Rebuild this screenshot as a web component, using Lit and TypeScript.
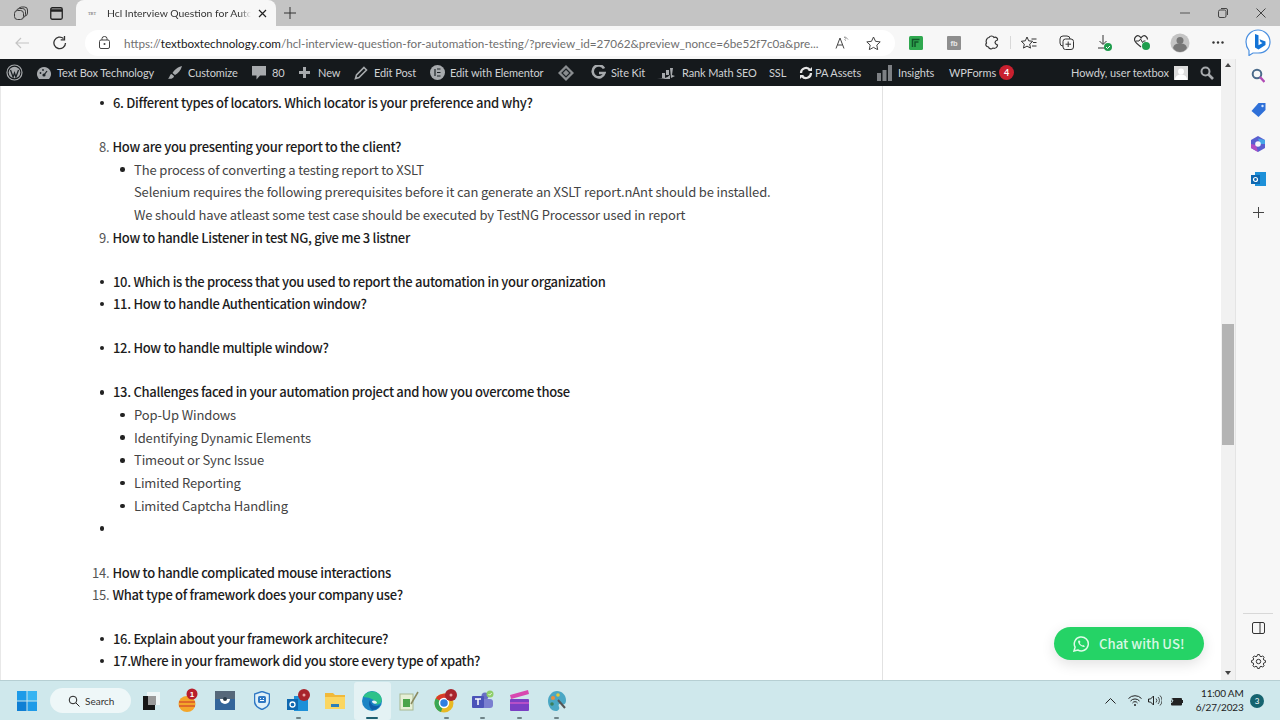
import { LitElement, html, css, svg } from "lit";
import { customElement } from "lit/decorators.js";

const ic = (w: number, h: number, body: unknown, vb = `0 0 ${w} ${h}`) =>
  html`<svg width=${w} height=${h} viewBox=${vb} fill="none">${body}</svg>`;

const GREY = "#a7aaad";
const S = "#3a3a3a";

const gearPath = (() => {
  const pts: string[] = [];
  const n = 8;
  for (let i = 0; i < n; i++) {
    const a = (i / n) * Math.PI * 2;
    const d = Math.PI / n;
    const p = (r: number, t: number) => `${(7.5 + r * Math.cos(t)).toFixed(2)} ${(7.5 + r * Math.sin(t)).toFixed(2)}`;
    pts.push(`${i ? "L" : "M"}${p(5.4, a - d * 0.75)}`, `L${p(7, a - d * 0.35)}`, `L${p(7, a + d * 0.35)}`, `L${p(5.4, a + d * 0.75)}`);
  }
  return pts.join(" ") + "Z";
})();

const barIcons: Record<string, unknown> = {
  wp: ic(17, 17, svg`<circle cx="8.5" cy="8.5" r="7.5" stroke="${GREY}" stroke-width="1.2"/><circle cx="8.5" cy="8.5" r="5.8" fill="${GREY}"/><path d="M4.5 6l2.6 7 1.4-4 1.4 4 2.6-7" stroke="#1d2327" stroke-width="1.3"/>`),
  gauge: ic(16, 14, svg`<path d="M8 1a7 7 0 0 0-6 10.6l1 1.4h10l1-1.4A7 7 0 0 0 8 1z" fill="${GREY}"/><circle cx="8" cy="9" r="1.6" fill="#1d2327"/><path d="M8 9l3-4" stroke="#1d2327" stroke-width="1.2"/><circle cx="4.5" cy="7" r=".9" fill="#1d2327"/><circle cx="7" cy="4" r=".9" fill="#1d2327"/>`),
  brush: ic(16, 15, svg`<path d="M15 1C11 2 7 5 5.5 8l2.5 2C11 8.500 14 5 15 1z" fill="${GREY}"/><path d="M4.500 9C2.500 9.500 3 12.500 1 13.500c2.500 1 6-.2 6-2.500z" fill="${GREY}"/>`),
  comment: ic(14, 15, svg`<path d="M0 1h14v9.500H8l-3.500 4v-4H0z" fill="${GREY}"/>`),
  plus: ic(13, 13, svg`<path d="M6.500 1v11M1 6.500h11" stroke="${GREY}" stroke-width="3"/>`),
  pencil: ic(14, 14, svg`<path d="M10 1.500l2.500 2.500L5 11.500l-3.500 1 1-3.500z" stroke="${GREY}" stroke-width="1.600"/>`),
  el: ic(15, 15, svg`<circle cx="7.500" cy="7.500" r="7.500" fill="${GREY}"/><path d="M5 4v7M7 4h3.500M7 7.500h3.500M7 11h3.500" stroke="#1d2327" stroke-width="1.200"/>`),
  diamond: ic(18, 18, svg`<path d="M9 1l8 8-8 8-8-8z" fill="#8a8d90"/><path d="M9 5l4 4-4 4-4-4z" stroke="#1d2327" stroke-width="1.200"/>`),
  g: ic(15, 15, svg`<path d="M13 3.500A6 6 0 1 0 13.500 8H8" stroke="${GREY}" stroke-width="2.600"/>`),
  rank: ic(18, 14, svg`<path d="M0 13c5 0 10-1 13-4v4zM5 7h3v5H5zM9 4h3v5H9z" fill="${GREY}"/><path d="M13 2l3 0-1 7 3 1-4 2z" fill="${GREY}"/>`),
  pa: ic(14, 14, svg`<path d="M2 7a5 5 0 0 1 9-3M12 7a5 5 0 0 1-9 3" stroke="#e6e6e6" stroke-width="2.200"/><path d="M9 5h4V1zM5 9H1v4z" fill="#e6e6e6"/>`),
  bars: ic(15, 16, svg`<path d="M0 8h4v8H0zM5.500 5h4v11h-4zM11 0h4v16h-4z" fill="#7d8084"/>`),
};

type BarItem = { x: number; icon?: string; text?: string; badge?: string };
const leftBar: BarItem[] = [
  { x: 6, icon: "wp" }, { x: 36, icon: "gauge" }, { x: 57, text: "Text Box Technology" },
  { x: 167, icon: "brush" }, { x: 188, text: "Customize" }, { x: 252, icon: "comment" },
  { x: 272, text: "80" }, { x: 298, icon: "plus" }, { x: 318, text: "New" }, { x: 354, icon: "pencil" },
  { x: 374, text: "Edit Post" }, { x: 430, icon: "el" }, { x: 450, text: "Edit with Elementor" },
  { x: 557, icon: "diamond" }, { x: 591, icon: "g" }, { x: 611, text: "Site Kit" }, { x: 657, icon: "rank" },
  { x: 682, text: "Rank Math SEO" }, { x: 769, text: "SSL" }, { x: 799, icon: "pa" }, { x: 815, text: "PA Assets" },
  { x: 877, icon: "bars" }, { x: 898, text: "Insights" }, { x: 949, text: "WPForms" }, { x: 999, badge: "4" },
  { x: 1071 },
];

type Row = { k: "bullet" | "num" | "sub" | "plain" | "blank" | "empty"; t?: string; n?: string };
const rows: Row[] = [
  { k: "bullet", t: "6. Different types of locators. Which locator is your preference and why?" },
  { k: "blank" },
  { k: "num", n: "8.", t: "How are you presenting your report to the client?" },
  { k: "sub", t: "The process of converting a testing report to XSLT" },
  { k: "plain", t: "Selenium requires the following prerequisites before it can generate an XSLT report.nAnt should be installed." },
  { k: "plain", t: "We should have atleast some test case should be executed by TestNG Processor used in report" },
  { k: "num", n: "9.", t: "How to handle Listener in test NG, give me 3 listner" },
  { k: "blank" },
  { k: "bullet", t: "10. Which is the process that you used to report the automation in your organization" },
  { k: "bullet", t: "11. How to handle Authentication window?" },
  { k: "blank" },
  { k: "bullet", t: "12. How to handle multiple window?" },
  { k: "blank" },
  { k: "bullet", t: "13. Challenges faced in your automation project and how you overcome those" },
  { k: "sub", t: "Pop-Up Windows" },
  { k: "sub", t: "Identifying Dynamic Elements" },
  { k: "sub", t: "Timeout or Sync Issue" },
  { k: "sub", t: "Limited Reporting" },
  { k: "sub", t: "Limited Captcha Handling" },
  { k: "empty" },
  { k: "blank" },
  { k: "num", n: "14.", t: "How to handle complicated mouse interactions" },
  { k: "num", n: "15.", t: "What type of framework does your company use?" },
  { k: "blank" },
  { k: "bullet", t: "16. Explain about your framework architecure?" },
  { k: "bullet", t: "17.Where in your framework did you store every type of xpath?" },
];

const tb = {
  win: ic(20, 20, svg`<path d="M0 0h9.500v9.500H0z" fill="#1e9be8"/><path d="M10.500 0H20v9.500h-9.500z" fill="#37b4f2"/><path d="M0 10.500h9.500V20H0z" fill="#0f7fd4"/><path d="M10.500 10.500H20V20h-9.500z" fill="#1e9be8"/>`),
  copilot: ic(18, 18, svg`<rect x="5" y="0" width="13" height="13" fill="#eef6f7"/><rect x="1" y="4" width="12" height="14" fill="#161616"/><rect x="6" y="4" width="8" height="9" fill="#9a9a9a"/>`),
  burger: ic(20, 26, svg`<ellipse cx="9" cy="16" rx="8.500" ry="8" fill="#f4a62a"/><path d="M1 14h16M1 18h16" stroke="#d8552a" stroke-width="1.500"/><circle cx="14" cy="6" r="5.500" fill="#b81f2c"/><text x="14" y="9" font-size="8" fill="#fff" text-anchor="middle" font-family="Liberation Sans" font-weight="700">1</text>`),
  pocket: ic(20, 19, svg`<rect width="20" height="19" fill="#33659a"/><rect width="20" height="8" fill="#56687a"/><path d="M5 8h10a5 5 0 0 1-10 0z" fill="#fff"/><circle cx="10" cy="8" r="2" fill="#2a3a48"/>`),
  shield: ic(16, 19, svg`<path d="M8 .500l7.500 2.500v7c0 4.500-3.500 7-7.500 8.500C4 17 .500 14.500.500 10V3z" fill="#dff0f8" stroke="#2f78c4" stroke-width="1.500"/><rect x="4" y="5" width="8" height="7" rx="1.500" fill="#2f78c4"/><path d="M6 7.500h1M9 7.500h1M6 9.500h4" stroke="#fff"/>`),
  outlook: ic(24, 24, svg`<rect x="7" y="7" width="14" height="15" fill="#1d90d8"/><rect x="0" y="10" width="11" height="11" fill="#0f68b0"/><circle cx="5.500" cy="15.500" r="2.500" stroke="#fff" stroke-width="1.300"/><circle cx="17" cy="6" r="6" fill="#a8242c"/><circle cx="17" cy="6" r="1.500" fill="#e9a8a8"/>`),
  folder: ic(20, 17, svg`<path d="M0 1h8l2 2h10v14H0z" fill="#f1b93a"/><path d="M0 5h20v12H0z" fill="#fbd661"/><rect x="6" y="12" width="8" height="3" fill="#2d7fb8"/>`),
  edge: ic(20, 20, svg`<circle cx="10" cy="10" r="10" fill="#1a84c4"/><path d="M1 6C4 0 13-2 18 4c3 4 2 9-2 9.500-3 .2-4-2-3-3-2-3-7-4-12-4.500z" fill="#2ec28a"/><path d="M10 10c2-1.500 5 0 5 2-2 1.500-5 .5-5-2z" fill="#e8f5f7"/><path d="M8 9c-2 3-1 7 2 10 5 0 7-3 8-5-3 2-9 2-10-5z" fill="#0d5ea8"/>`),
  sheet: ic(20, 20, svg`<rect x="1" y="3" width="13" height="16" fill="#e6f0d6" stroke="#a8b890"/><path d="M4 8h7v8H4z" fill="#4ca44a"/><path d="M12 13L19 1" stroke="#8a8a60" stroke-width="1.500"/>`),
  chrome: ic(24, 24, svg`<circle cx="10" cy="14" r="9.500" fill="#e8b923"/><path d="M10 14L1.700 9.500A9.500 9.500 0 0 1 18 9z" fill="#d93a2b"/><path d="M10 14L1.700 9.500A9.500 9.500 0 0 0 7 23z" fill="#3aa655"/><circle cx="10" cy="14" r="4.500" fill="#2f7fe0" stroke="#fff" stroke-width="1.500"/><circle cx="17" cy="6" r="6" fill="#a8242c"/><circle cx="17" cy="6" r="1.500" fill="#e9a8a8"/>`),
  teams: ic(22, 21, svg`<circle cx="13" cy="6" r="3.500" fill="#6a6fc4"/><rect x="9" y="9" width="12" height="9" rx="3" fill="#7a7fd0"/><rect x="0" y="6" width="12" height="12" rx="1" fill="#4b53b8"/><path d="M3 9h6M6 9v6" stroke="#fff" stroke-width="1.500"/><circle cx="18" cy="4" r="3.500" fill="#8fce6a"/><path d="M16.500 4l1.200 1.200 2-2.200" stroke="#fff" stroke-width=".8"/>`),
  clap: ic(21, 21, svg`<path d="M1 5l18-5 1 4L2 9z" fill="#d848b0"/><rect x="1" y="9" width="19" height="12" rx="1" fill="#7a3fc4"/><path d="M1 13h19" stroke="#b650c8" stroke-width="2"/>`),
  palette: ic(20, 20, svg`<path d="M10 0c5 0 9 4 9 9s-3 5-5 4-3 1-2 3-1 4-3 4C4 20 1 15 1 10S5 0 10 0z" fill="#4aa7c4"/><circle cx="6" cy="7" r="2" fill="#ef8d3a"/><circle cx="11" cy="4" r="1.800" fill="#e4c93a"/><circle cx="5" cy="13" r="1.800" fill="#3a7f5a"/><path d="M11 9l7 8" stroke="#555" stroke-width="2"/>`),
};

const taskApps: { i: unknown; dot?: boolean; active?: boolean }[] = [
  { i: tb.copilot }, { i: tb.burger }, { i: tb.pocket }, { i: tb.shield },
  { i: tb.outlook, dot: true }, { i: tb.folder }, { i: tb.edge, dot: true, active: true }, { i: tb.sheet },
  { i: tb.chrome, dot: true }, { i: tb.teams, dot: true }, { i: tb.clap, dot: true }, { i: tb.palette, dot: true },
];

@customElement("app-root")
export class AppRoot extends LitElement {
  static styles = css`
    :host { display: flex; flex-direction: column; width: 1280px; height: 720px; overflow: hidden; background: #fff; font-family: Lato, sans-serif; }
    .tabstrip { height: 26px; background: #c4c4c4; display: flex; align-items: flex-end; flex: none; }
    .tb-l { width: 76px; height: 26px; display: flex; align-items: center; gap: 22px; padding-left: 14px; box-sizing: border-box; }
    .tab { width: 200px; height: 26px; background: #f7f7f7; border-radius: 8px 8px 0 0; display: flex; align-items: center; box-sizing: border-box; padding-left: 12px; font-size: 10.400px; color: #333; }
    .tab .fav { width: 19px; font-size: 6px; color: #777; font-family: "Liberation Serif", serif; flex: none; }
    .tab .title { width: 144px; white-space: nowrap; -webkit-mask-image: linear-gradient(90deg, #000 92%, transparent); flex: none; }
    .tab .x { margin-left: 7px; display: flex; }
    .plus { margin-left: 8px; height: 26px; display: flex; align-items: center; }
    .grow { flex: 1; }
    .win { height: 26px; display: flex; align-items: center; gap: 28px; padding-right: 14px; }
    .toolbar { height: 33px; background: #f7f7f7; display: flex; align-items: center; flex: none; box-sizing: border-box; position: relative; }
    .nav { width: 85px; display: flex; align-items: center; gap: 24px; padding-left: 15px; box-sizing: border-box; }
    .addr { width: 810px; height: 26px; background: #fff; border-radius: 13px; display: flex; align-items: center; box-sizing: border-box; padding-left: 14px; }
    .url { margin-left: 14px; width: 695px; font-size: 11.700px; color: #6f6f6f; white-space: nowrap; }
    .url b { font-weight: 400; color: #1a1a1a; }
    .addr .a { margin-left: 16px; margin-right: 17px; display: flex; }
    .ext { display: flex; align-items: center; margin-left: 2px; }
    .ext > span { width: 37.750px; display: flex; justify-content: center; align-items: center; position: relative; }
    .ext > span.div::after { content: ""; position: absolute; right: -1px; top: 1px; bottom: 1px; width: 1px; background: #d8d8d8; }
    .bing { margin-left: 8px; display: flex; }
    .main { flex: 1; display: flex; min-height: 0; position: relative; }
    .page { width: 1221px; display: flex; flex-direction: column; flex: none; }
    .admin { height: 27px; background: #15191c; display: flex; align-items: center; flex: none; color: #cfd1d3; font-size: 11px; letter-spacing: -.1px; }
    .slot { display: flex; align-items: center; white-space: nowrap; flex: none; }
    .badge { width: 15px; height: 15px; border-radius: 50%; background: #c9202f; color: #fff; font-size: 9px; font-weight: 700; display: flex; align-items: center; justify-content: center; }
    .howdy { margin-right: 5px; width: 98px; }
    .avatar { width: 14px; height: 14px; background: #dcdcdc; display: flex; margin-right: 12px; overflow: hidden; }
    .content { flex: 1; display: flex; min-height: 0; overflow: hidden; background: #fff; }
    .article { width: 883px; box-sizing: border-box; border-right: 1px solid #e2e2e2; padding-top: 6px; border-left: 1px solid #e8e8e8; flex: none; font-family: "Noto Sans CJK JP", "Noto Sans", sans-serif; font-size: 13px; letter-spacing: -.145px; color: #444; }
    .row { height: 22.100px; display: flex; align-items: center; white-space: nowrap; line-height: 22px; }
    .row b { font-weight: 500; color: #1c1c1c; letter-spacing: -.31px; }
    .row.sub, .row.plain { height: 22.800px; }
    .mark { width: 111.500px; flex: none; text-align: right; box-sizing: border-box; }
    .mark.n { padding-right: 3px; color: #555; }
    .dot { width: 112px; flex: none; display: flex; justify-content: flex-end; padding-right: 9px; box-sizing: border-box; }
    .dot i, .sdot i { width: 4.500px; height: 4.500px; border-radius: 50%; background: #222; display: block; }
    .sdot { width: 133px; flex: none; display: flex; justify-content: flex-end; padding-right: 9.500px; box-sizing: border-box; }
    .indent { width: 133px; flex: none; }
    .sb { width: 14px; background: #f1f1f1; flex: none; display: flex; flex-direction: column; align-items: center; border-right: 1px solid #e4e4e4; }
    .sb .up { margin-top: 4px; width: 0; height: 0; border: 3.500px solid transparent; border-top: 0; border-bottom: 4px solid #444; }
    .thumb { margin-top: 257px; width: 12px; height: 121px; background: #b4b4b4; flex: none; }
    .sb .down { margin-top: auto; margin-bottom: 5px; width: 0; height: 0; border: 3.500px solid transparent; border-bottom: 0; border-top: 4px solid #444; }
    .side { flex: 1; background: #f7f7f7; display: flex; flex-direction: column; align-items: center; }
    .side .top { display: flex; flex-direction: column; gap: 19.500px; align-items: center; padding-top: 9px; }
    .side .top svg:last-child { margin-top: 2px; }
    .side .bot { margin-top: auto; display: flex; flex-direction: column; gap: 20px; padding-bottom: 11px; align-items: center; }
    .sep { width: 30px; height: 1px; background: #d8d8d8; margin-bottom: -12px; }
    .chat { position: absolute; left: 1054px; top: 568px; width: 150px; height: 33px; border-radius: 17px; background: #25d366; color: #d8f8e4; display: flex; align-items: center; gap: 10px; padding-left: 19px; box-sizing: border-box; font-size: 13.200px; font-weight: 500; font-family: "Noto Sans CJK JP", "Noto Sans", sans-serif; box-shadow: 0 4px 14px rgba(0,0,0,.12); }
    .taskbar { height: 40px; background: #cfe8ec; border-top: 1px solid #b6cfd3; box-sizing: border-box; display: flex; align-items: center; flex: none; }
    .start { width: 50px; display: flex; justify-content: center; padding-left: 4px; box-sizing: border-box; }
    .search { width: 81px; height: 25px; background: #eef7f8; border-radius: 13px; display: flex; align-items: center; gap: 5px; padding-left: 18px; box-sizing: border-box; font-size: 10px; color: #333; }
    .apps { display: flex; margin-left: 1.500px; }
    .app { width: 36.900px; height: 38px; display: flex; align-items: center; justify-content: center; position: relative; }
    .app.active { background: #e4f2f4; border-radius: 3px; }
    .app .ind { position: absolute; bottom: 1px; left: 50%; width: 5px; margin-left: -2.500px; height: 2px; background: #6f8488; border-radius: 1px; }
    .app.active .ind { width: 12px; margin-left: -6px; background: #1d5f70; }
    .tray { margin-left: auto; display: flex; align-items: center; gap: 6.500px; padding-right: 16px; }
    .tray .chev { margin-right: 5px; display: flex; }
    .clock { text-align: right; font-size: 10px; letter-spacing: -.2px; line-height: 13.500px; color: #222; margin-left: 6.500px; }
    .count { width: 14px; height: 14px; border-radius: 50%; background: #15636f; color: #fff; font-size: 8px; display: flex; align-items: center; justify-content: center; }
  `;

  private bar() {
    const items = leftBar.slice(0, -1).map((it, i) => {
      const w = leftBar[i + 1].x - it.x;
      return html`<span class="slot" style="width:${w}px">${it.icon ? barIcons[it.icon] : ""}${it.text ?? ""}${it.badge ? html`<span class="badge">${it.badge}</span>` : ""}</span>`;
    });
    return html`<div class="admin">
      <span class="slot" style="width:6px"></span>${items}
      <span class="slot howdy">Howdy, user textbox</span>
      <span class="avatar">${ic(14, 14, svg`<circle cx="7" cy="5.500" r="3" fill="#fff"/><path d="M1 14c0-4 3-5.500 6-5.500s6 1.500 6 5.500z" fill="#fff"/>`)}</span>
      ${ic(14, 14, svg`<circle cx="5.500" cy="5.500" r="4" stroke="${GREY}" stroke-width="2"/><path d="M8.500 8.500l4.500 4.500" stroke="${GREY}" stroke-width="2.600"/>`)}
    </div>`;
  }

  private row(r: Row) {
    switch (r.k) {
      case "blank": return html`<div class="row"></div>`;
      case "empty": return html`<div class="row"><span class="dot"><i></i></span></div>`;
      case "bullet": return html`<div class="row"><span class="dot"><i></i></span><b>${r.t}</b></div>`;
      case "num": return html`<div class="row"><span class="mark n">${r.n}</span><b>${r.t}</b></div>`;
      case "sub": return html`<div class="row sub"><span class="sdot"><i></i></span>${r.t}</div>`;
      default: return html`<div class="row plain"><span class="indent"></span>${r.t}</div>`;
    }
  }

  render() {
    return html`
      <div class="tabstrip">
        <div class="tb-l">
          ${ic(14, 14, svg`<rect x="4.500" y="1" width="9" height="9" rx="3" stroke="${S}"/><rect x="2.500" y="2.500" width="9" height="9" rx="3" stroke="${S}" fill="#c4c4c4"/><rect x=".5" y="4.500" width="9" height="9" rx="3" stroke="${S}" fill="#c4c4c4"/>`)}
          ${ic(13, 13, svg`<rect x=".75" y=".75" width="11.500" height="11.500" rx="1.500" stroke="#222" stroke-width="1.300"/><path d="M1 3.500h11" stroke="#222" stroke-width="2.500"/>`)}
        </div>
        <div class="tab">
          <span class="fav">ᴛʙᴛ</span>
          <span class="title">Hcl Interview Question for Autom</span>
          <span class="x">${ic(9, 9, svg`<path d="M1 1l7 7M8 1L1 8" stroke="#222" stroke-width="1.200"/>`)}</span>
        </div>
        <div class="plus">${ic(12, 12, svg`<path d="M6 0v12M0 6h12" stroke="#333"/>`)}</div>
        <div class="grow"></div>
        <div class="win">
          ${ic(10, 10, svg`<path d="M0 5h10" stroke="#555"/>`)}
          ${ic(10, 10, svg`<rect x=".5" y="2" width="7.500" height="7.500" rx="1.500" stroke="#444"/><path d="M3 .5h5a1.500 1.500 0 0 1 1.500 1.500v5" stroke="#444"/>`)}
          ${ic(10, 10, svg`<path d="M.5.5l9 9M9.500.5l-9 9" stroke="#444"/>`)}
        </div>
      </div>
      <div class="toolbar">
        <div class="nav">
          ${ic(14, 12, svg`<path d="M14 6H1M6 1L1 6l5 5" stroke="#c4c4c4" stroke-width="1.200"/>`)}
          ${ic(14, 14, svg`<path d="M12.500 7A5.800 5.800 0 1 1 10.500 2.500" stroke="#333" stroke-width="1.300"/><path d="M11.500 0v3.800H7.700" stroke="#333" stroke-width="1.300"/>`)}
        </div>
        <div class="addr">
          ${ic(11, 13, svg`<rect x=".5" y="4" width="10" height="8.500" rx="1.500" stroke="#444"/><path d="M3 4V2.500a2.500 2 0 0 1 5 0V4" stroke="#444"/><circle cx="5.500" cy="8" r="1" fill="#444"/>`)}
          <span class="url">https://<b>textboxtechnology.com</b>/hcl-interview-question-for-automation-testing/?preview_id=27062&amp;preview_nonce=6be52f7c0a&amp;pre...</span>
          <span class="a">${ic(14, 13, svg`<path d="M1 12.500L5 2l4 10.500M2.500 9h5" stroke="#444" stroke-width="1"/><path d="M9 1l2 1.500M10 .5l3 3M9.500 3.500l1.500 1" stroke="#777" stroke-width=".8"/>`)}</span>
          ${ic(15, 14, svg`<path d="M7.500 1l2 4.300 4.700.6-3.400 3.200.9 4.600-4.200-2.300-4.200 2.300.9-4.600L.8 5.900l4.700-.6z" stroke="#444"/>`)}
        </div>
        <div class="ext">
          <span>${ic(14, 14, svg`<rect width="14" height="14" rx="1.500" fill="#2fa84f"/><path d="M3.500 11V3.500h7M6 11V6h3.500" stroke="#12552a" stroke-width="1.500"/>`)}</span>
          <span>${ic(14, 14, svg`<rect width="14" height="14" rx="1" fill="#8e8e8e"/><text x="7" y="10" font-size="7.500" font-weight="700" fill="#e8e8e8" text-anchor="middle" font-family="Liberation Sans">fb</text>`)}</span>
          <span class="div">${ic(15, 15, svg`<path d="M5 2.500C6 .5 9 .500 10 2.500c2-1 4 1 3.500 2.500C12 5.500 11 7 11 7.500s1 2 2.500 2.500c0 2-2 4-4.500 3-1 1.500-4 1-4.500-1C2 12 1 9.500 2.500 8c-1-2 0-5 2.500-5.500z" stroke="#333" stroke-width="1.200"/>`)}</span>
          <span>${ic(16, 14, svg`<path d="M6 1l1.700 3.800 4 .5-3 2.800.8 4-3.500-2-3.500 2 .8-4-3-2.800 4-.5z" stroke="#333"/><path d="M10.500 3h5M12 6.500h3.500M11 10h4.500" stroke="#333"/>`)}</span>
          <span>${ic(15, 15, svg`<rect x="1" y="1" width="10" height="10" rx="3" stroke="#333"/><rect x="4" y="4" width="10.500" height="10.500" rx="2.500" fill="#f7f7f7" stroke="#333"/><path d="M9.200 6.500v5.500M6.500 9.200H12" stroke="#333"/>`)}</span>
          <span>${ic(15, 16, svg`<path d="M6 0v9M2.500 6L6 9.500 9.500 6M1 13h7" stroke="#333"/><circle cx="11" cy="12" r="4" fill="#1f9d4d"/><path d="M9 12l1.500 1.500L13 11" stroke="#fff"/>`)}</span>
          <span>${ic(16, 15, svg`<path d="M7 12C3 9 .5 7 .5 4.500 .5 2 3 0 5 1c1 .5 1.500 1 2 2 .5-1 1-1.500 2-2 2-1 4.500 1 4.500 3.500" stroke="#333" stroke-width="1.200"/><path d="M2 6h3l1.500-2 2 3.500 1-1.500h2" stroke="#333"/><circle cx="12" cy="11" r="4" fill="#1f9d4d"/>`)}</span>
          <span>${ic(20, 20, svg`<circle cx="10" cy="10" r="9.500" fill="#c4c4c4"/><circle cx="10" cy="7.500" r="3.500" fill="#777"/><path d="M3 15c1-4 4-4.500 7-4.500s6 .5 7 4.500c-2 3-5 4-7 4s-5-1-7-4z" fill="#777"/>`)}</span>
          <span>${ic(12, 3, svg`<circle cx="1.500" cy="1.500" r="1.200" fill="#333"/><circle cx="6" cy="1.500" r="1.200" fill="#333"/><circle cx="10.500" cy="1.500" r="1.200" fill="#333"/>`)}</span>
        </div>
        <span class="bing">${ic(26, 27, svg`<path d="M13 1a12 12 0 0 1 12 12c0 6.500-5 11-12 11H8l-4 2.500v-5C2 19 1 16.500 1 13A12 12 0 0 1 13 1z" fill="#fff" stroke="#4a8fe0" stroke-width="1.200"/><path d="M10 5l3.500 1.300v10l4-2.300-2-1-1-2.700 6 2.200v3.500l-7 4.500-3.500-2z" fill="#1373d6"/>`)}</span>
      </div>
      <div class="main">
        <div class="page">
          ${this.bar()}
          <div class="content">
            <div class="article">${rows.map((r) => this.row(r))}</div>
          </div>
        </div>
        <div class="sb"><span class="up"></span><span class="thumb"></span><span class="down"></span></div>
        <div class="side">
          <div class="top">
            ${ic(14, 15, svg`<circle cx="6" cy="6" r="4.300" stroke="#4a6a8a" stroke-width="2"/><path d="M9 9l4.500 5" stroke="#b14bb5" stroke-width="2.400"/>`)}
            ${ic(15, 14, svg`<path d="M14.500 0v7l-7 7L.5 8l7-8z" fill="#2f70d8"/><circle cx="11.500" cy="3" r="1.200" fill="#d6e6ff"/>`)}
            ${ic(14, 16, svg`<path d="M7 0l7 4v8l-7 4-7-4V4z" fill="#5a5fd0"/><path d="M7 2.500L14 4v4H9z" fill="#45a6e8"/><path d="M0 8l5 1 2 7-7-4z" fill="#b04fc4"/><circle cx="7" cy="8" r="2.800" fill="#f7f7f7"/>`)}
            ${ic(15, 14, svg`<rect x="4" y="0" width="11" height="14" fill="#1d90d8"/><rect x="0" y="3" width="9" height="9" fill="#0f68b0"/><circle cx="4.500" cy="7.500" r="2" stroke="#fff" stroke-width="1.200"/>`)}
            ${ic(11, 11, svg`<path d="M5.500 0v11M0 5.500h11" stroke="#444"/>`)}
          </div>
          <div class="bot">
            <span class="sep"></span>
            ${ic(13, 12, svg`<rect x=".5" y=".5" width="12" height="11" rx="1.500" stroke="#333"/><path d="M8 .5v11" stroke="#333"/>`)}
            ${ic(15, 15, svg`<path d="${gearPath}" stroke="#333"/><circle cx="7.500" cy="7.500" r="2.200" stroke="#333"/>`)}
          </div>
        </div>
        <div class="chat">
          ${ic(16, 16, svg`<path d="M1 15l1.100-3.800A7 7 0 1 1 4.800 14z" stroke="#e0fbe9" stroke-width="1.500"/><path d="M5.500 4.500c-1 1 0 3.500 1.800 5s4 2 4.700.8l-1.800-1.400-1 .7c-1-.4-2-1.500-2.500-2.500l.8-1-1-1.700z" fill="#e0fbe9"/>`)}
          <span>Chat with US!</span>
        </div>
      </div>
      <div class="taskbar">
        <div class="start">${tb.win}</div>
        <div class="search">${ic(12, 12, svg`<circle cx="5" cy="5" r="3.800" stroke="#222"/><path d="M8 8l3.500 3.500" stroke="#222"/>`)}Search</div>
        <div class="apps">${taskApps.map((a) => html`<span class="app ${a.active ? "active" : ""}">${a.i}${a.dot ? html`<span class="ind"></span>` : ""}</span>`)}</div>
        <div class="tray">
          <span class="chev">${ic(11, 6, svg`<path d="M.5 5.500L5.500 .5l5 5" stroke="#222"/>`)}</span>
          ${ic(14, 11, svg`<path d="M.5 3.500a9 9 0 0 1 13 0M2.500 6a6 6 0 0 1 9 0M4.500 8a3 3 0 0 1 5 0" stroke="#222"/><circle cx="7" cy="10" r="1" fill="#222"/>`)}
          ${ic(14, 11, svg`<path d="M.5 4v3h2l3 3V1l-3 3z" stroke="#222"/><path d="M8 3.500a3 3 0 0 1 0 4M10 2a5 5 0 0 1 0 7M12 .5a7 7 0 0 1 0 10" stroke="#222" stroke-width=".8"/>`)}
          ${ic(14, 10, svg`<rect x="2" y="2" width="11" height="7.500" rx="1" fill="#222"/><path d="M13 4h1v3h-1z" fill="#222"/><path d="M4 0L2 4h2L2.500 7" stroke="#cfe8ec"/>`)}
          <div class="clock">11:00 AM<br />6/27/2023</div>
          <span class="count">3</span>
        </div>
      </div>
    `;
  }
}
